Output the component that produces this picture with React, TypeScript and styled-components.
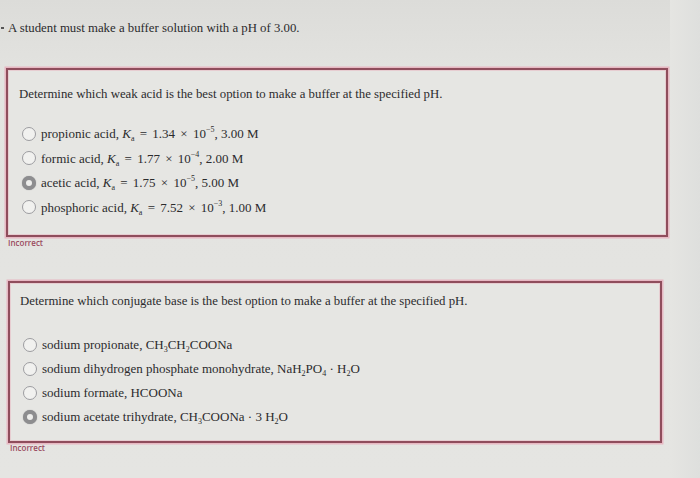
import React from "react";
import styled, { createGlobalStyle } from "styled-components";

const Global = createGlobalStyle`
  html, body {
    margin: 0;
    padding: 0;
    background: #e2e2df;
  }
  body {
    width: 700px;
    height: 478px;
    overflow: hidden;
    font-family: "Liberation Serif", "Times New Roman", serif;
    color: #2b2b2d;
  }
`;

const Page = styled.div`
  position: relative;
  width: 700px;
  height: 478px;
  background: linear-gradient(180deg, #dcdcd9 0%, #e3e3e0 16%, #e5e5e2 100%);
  display: flex;
  flex-direction: column;
`;

const EdgeShade = styled.div`
  position: absolute;
  top: 0;
  right: 0;
  width: 30px;
  height: 100%;
  background: linear-gradient(90deg, #e5e5e2 0%, #dedfdd 100%);
  pointer-events: none;
`;

const Prompt = styled.div`
  display: flex;
  align-items: center;
  gap: 4px;
  margin: 19px 0 0 0;
  font-size: 12.8px;
  line-height: 18px;
`;

const Tick = styled.span`
  display: inline-block;
  width: 3px;
  height: 2px;
  background: #555;
  margin-left: 1px;
`;

const Card = styled.div<{ $left: number; $width: number; $height: number; $top: number; $pad: number }>`
  margin-top: ${(p) => p.$top}px;
  margin-left: ${(p) => p.$left}px;
  width: ${(p) => p.$width}px;
  height: ${(p) => p.$height}px;
  box-sizing: border-box;
  border: 2px solid #8f4d5c;
  box-shadow: 0 0 0 1.5px rgba(232, 170, 184, 0.75), inset 0 0 0 1px rgba(232, 180, 192, 0.5);
  background: #e6e6e3;
  display: flex;
  flex-direction: column;
  padding: ${(p) => `${p.$pad}px 0 0 ${p.$left === 6 ? 11 : 10}px`};
`;

const Question = styled.div`
  font-size: 12.8px;
  line-height: 17px;
  color: #2c2c2e;
`;

const Options = styled.div<{ $top: number; $gap: number }>`
  margin: ${(p) => p.$top}px 0 0 3px;
  display: flex;
  flex-direction: column;
  gap: ${(p) => p.$gap}px;
`;

const Option = styled.div`
  display: flex;
  align-items: center;
  gap: 5px;
  font-size: 13px;
  line-height: 17px;
  height: 17px;
`;

const Radio = styled.span<{ $checked?: boolean }>`
  display: inline-block;
  box-sizing: border-box;
  width: 14px;
  height: 14px;
  border-radius: 50%;
  flex: none;
  background: ${(p) => (p.$checked ? "#eeeeec" : "#f1f1ef")};
  border: ${(p) => (p.$checked ? "4px solid #8d8d8f" : "1.3px solid #9c9ca0")};
  box-shadow: ${(p) => (p.$checked ? "0 0 1px #8d8d8f" : "none")};
`;

const Feedback = styled.div<{ $left: number; $top: number }>`
  margin: ${(p) => p.$top}px 0 0 ${(p) => p.$left}px;
  font-family: "Open Sans", "Liberation Sans", sans-serif;
  font-size: 8px;
  line-height: 10px;
  color: #9a4a5e;
  font-weight: 600;
`;

const I = styled.i`
  font-style: italic;
`;

const Op = styled.span`
  margin: 0 2px;
`;

const Sub = styled.sub`
  font-size: 8px;
  vertical-align: -3px;
  line-height: 0;
`;

const Sup = styled.sup`
  font-size: 8px;
  vertical-align: 6px;
  line-height: 0;
`;

const Ka = () => (
  <>
    <I>K</I>
    <Sub>a</Sub>
  </>
);

const acids = [
  { name: "propionic acid", k: "1.34", e: "−5", c: "3.00 M" },
  { name: "formic acid", k: "1.77", e: "−4", c: "2.00 M" },
  { name: "acetic acid", k: "1.75", e: "−5", c: "5.00 M", checked: true },
  { name: "phosphoric acid", k: "7.52", e: "−3", c: "1.00 M" },
];

export default function App() {
  return (
    <>
      <Global />
      <Page>
        <EdgeShade />
        <Prompt>
          <Tick />
          <span>A student must make a buffer solution with a pH of 3.00.</span>
        </Prompt>

        <Card $top={31} $left={6} $width={662} $height={169} $pad={16}>
          <Question>Determine which weak acid is the best option to make a buffer at the specified pH.</Question>
          <Options $top={22} $gap={7.5}>
            {acids.map((a) => (
              <Option key={a.name}>
                <Radio $checked={a.checked} />
                <span>
                  {a.name}, <Ka /> <Op>=</Op> {a.k} <Op>×</Op> 10<Sup>{a.e}</Sup>, {a.c}
                </span>
              </Option>
            ))}
          </Options>
        </Card>
        <Feedback $left={8} $top={1}>Incorrect</Feedback>

        <Card $top={33} $left={8} $width={654} $height={162} $pad={10}>
          <Question>Determine which conjugate base is the best option to make a buffer at the specified pH.</Question>
          <Options $top={26} $gap={7}>
            <Option>
              <Radio />
              <span>
                sodium propionate, CH<Sub>3</Sub>CH<Sub>2</Sub>COONa
              </span>
            </Option>
            <Option>
              <Radio />
              <span>
                sodium dihydrogen phosphate monohydrate, NaH<Sub>2</Sub>PO<Sub>4</Sub> · H<Sub>2</Sub>O
              </span>
            </Option>
            <Option>
              <Radio />
              <span>sodium formate, HCOONa</span>
            </Option>
            <Option>
              <Radio $checked />
              <span>
                sodium acetate trihydrate, CH<Sub>3</Sub>COONa · 3 H<Sub>2</Sub>O
              </span>
            </Option>
          </Options>
        </Card>
        <Feedback $left={10} $top={0}>Incorrect</Feedback>
      </Page>
    </>
  );
}
